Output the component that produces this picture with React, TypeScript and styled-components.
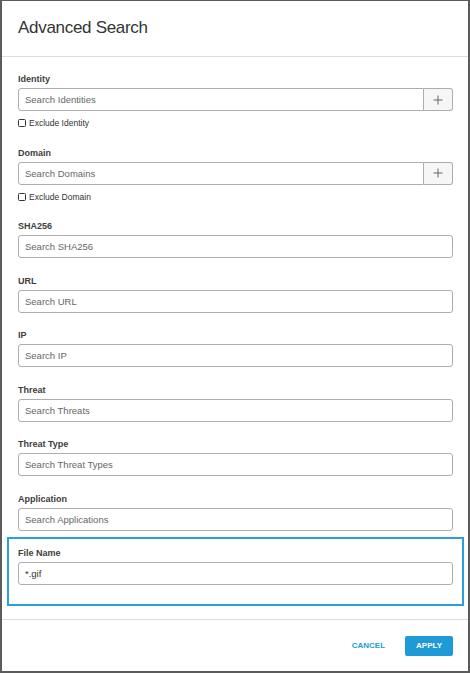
import styled, { createGlobalStyle } from "styled-components";

const GlobalStyle = createGlobalStyle`
  * {
    box-sizing: border-box;
  }
  body {
    margin: 0;
    background: #5b5b5b;
    font-family: "Liberation Sans", Arial, sans-serif;
  }
`;

const Dialog = styled.div`
  width: 470px;
  height: 673px;
  display: flex;
  flex-direction: column;
  background: #fff;
  border-style: solid;
  border-color: #5b5b5b;
  border-width: 1px 2px 2px 2px;
`;

const Header = styled.div`
  height: 56px;
  display: flex;
  align-items: center;
  padding: 0 16px 1px;
  border-bottom: 1px solid #dcdcdc;

  > h1 {
    margin: 0;
    font-size: 17px;
    font-weight: normal;
    letter-spacing: -0.3px;
    color: #333;
  }
`;

const Body = styled.div`
  flex: 1;
  padding: 16px 15px 0 16px;
`;

const Field = styled.div<{ $highlight?: boolean; $gap?: number }>`
  margin-bottom: ${(p) => (p.$highlight ? 0 : p.$gap ?? 16.5)}px;

  ${(p) =>
    p.$highlight &&
    `
    margin: -10px -11px 0;
    padding: 7.5px 9px 19px;
    border: 2px solid #2a9fd8;
  `}
`;

const Label = styled.div`
  height: 12px;
  line-height: 12px;
  margin-bottom: 3px;
  font-size: 9px;
  font-weight: bold;
  color: #3d3d3d;
`;

const InputRow = styled.div`
  display: flex;
  height: 23px;
`;

const Input = styled.input<{ $joined?: boolean }>`
  flex: 1;
  min-width: 0;
  height: 23px;
  padding: 0 6px;
  border: 1px solid #adadad;
  border-radius: ${(p) => (p.$joined ? "3px 0 0 3px" : "3px")};
  font-family: "Liberation Sans", Arial, sans-serif;
  font-size: 9.5px;
  color: #333;
  outline: none;

  &::placeholder {
    color: #666;
  }
`;

const AddButton = styled.button`
  width: 29px;
  height: 23px;
  padding: 0;
  display: flex;
  align-items: center;
  justify-content: center;
  background: #f6f6f6;
  border: 1px solid #adadad;
  border-left: none;
  border-radius: 0 3px 3px 0;
`;

const CheckRow = styled.label`
  display: flex;
  align-items: center;
  gap: 3px;
  height: 12px;
  margin-top: 6px;
  font-size: 8.5px;
  color: #333;
`;

const Box = styled.span`
  width: 8px;
  height: 8px;
  border: 1px solid #333;
  border-radius: 1.5px;
`;

const Footer = styled.div`
  height: 52px;
  display: flex;
  align-items: center;
  justify-content: flex-end;
  gap: 20px;
  padding-right: 15px;
  border-top: 1px solid #dcdcdc;
`;

const Button = styled.button<{ $primary?: boolean }>`
  height: 20px;
  padding: 0 ${(p) => (p.$primary ? "11px" : "0")};
  border: none;
  border-radius: 2px;
  background: ${(p) => (p.$primary ? "#1e9ad6" : "transparent")};
  color: ${(p) => (p.$primary ? "#fff" : "#1e9ad6")};
  font-family: "Liberation Sans", Arial, sans-serif;
  font-size: 8px;
  font-weight: bold;
`;

const Plus = () => (
  <svg width="10" height="10" viewBox="0 0 10 10">
    <path d="M5 0.5v9M0.5 5h9" stroke="#666" strokeWidth="1" fill="none" />
  </svg>
);

const fields = [
  { label: "SHA256", placeholder: "Search SHA256" },
  { label: "URL", placeholder: "Search URL" },
  { label: "IP", placeholder: "Search IP" },
  { label: "Threat", placeholder: "Search Threats" },
  { label: "Threat Type", placeholder: "Search Threat Types" },
  { label: "Application", placeholder: "Search Applications" },
];

function Excludable({ label, placeholder, exclude }: { label: string; placeholder: string; exclude: string }) {
  return (
    <Field $gap={17.5}>
      <Label>{label}</Label>
      <InputRow>
        <Input $joined placeholder={placeholder} />
        <AddButton>
          <Plus />
        </AddButton>
      </InputRow>
      <CheckRow>
        <Box />
        {exclude}
      </CheckRow>
    </Field>
  );
}

export default function App() {
  return (
    <>
      <GlobalStyle />
      <Dialog>
        <Header>
          <h1>Advanced Search</h1>
        </Header>
        <Body>
          <Excludable label="Identity" placeholder="Search Identities" exclude="Exclude Identity" />
          <Excludable label="Domain" placeholder="Search Domains" exclude="Exclude Domain" />
          {fields.map((f) => (
            <Field key={f.label}>
              <Label>{f.label}</Label>
              <InputRow>
                <Input placeholder={f.placeholder} />
              </InputRow>
            </Field>
          ))}
          <Field $highlight>
            <Label>File Name</Label>
            <InputRow>
              <Input defaultValue="*.gif" />
            </InputRow>
          </Field>
        </Body>
        <Footer>
          <Button>CANCEL</Button>
          <Button $primary>APPLY</Button>
        </Footer>
      </Dialog>
    </>
  );
}
